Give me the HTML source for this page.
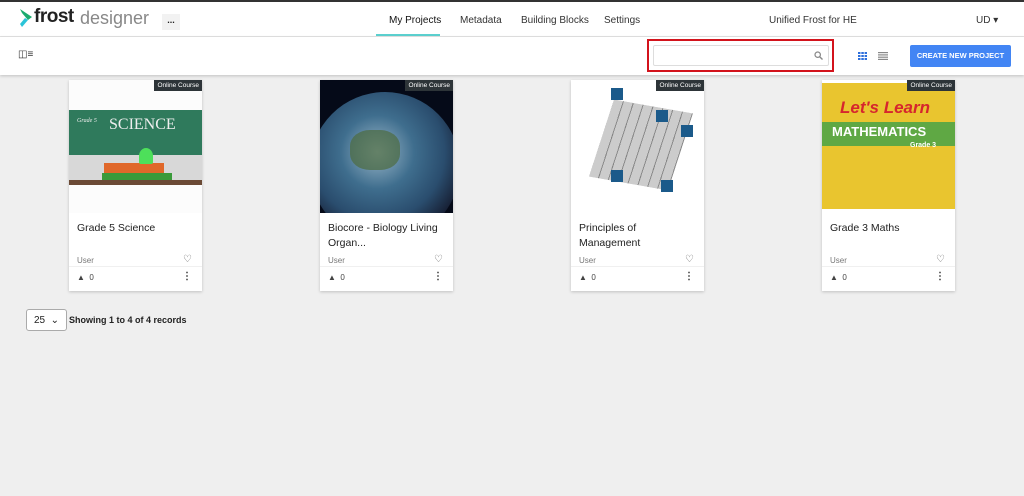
<!DOCTYPE html>
<html><head><style>
*{box-sizing:border-box;margin:0;padding:0}
body{width:1024px;height:496px;background:#efefef;font-family:"Liberation Sans",sans-serif;position:relative;overflow:hidden;color:#222}
.top{position:absolute;left:0;top:0;width:1024px;height:37px;background:#fff;border-top:2px solid #333;border-bottom:1px solid #e3e3e3}
.bar{position:absolute;left:0;top:37px;width:1024px;height:38px;background:#fff;box-shadow:0 1px 3px rgba(0,0,0,.2)}
.a{position:absolute}
.nav{font-size:10px;color:#333;top:13px}
.card{position:absolute;top:80px;width:133px;height:211px;background:#fff;box-shadow:0 1px 3px rgba(0,0,0,.2)}
.img{position:absolute;left:0;top:0;width:133px;height:133px;overflow:hidden}
.tag{position:absolute;right:0;top:0;background:#2d3438;color:#fff;font-size:6.5px;padding:2px 3px}
.ttl{position:absolute;left:8px;top:141px;font-size:10.5px;line-height:15px;color:#222;width:120px}
.user{position:absolute;left:8px;top:176px;font-size:8px;color:#777}
.heart{position:absolute;right:10px;top:174px;font-size:10px;color:#666}
.line{position:absolute;left:0;top:186px;width:133px;border-top:1px solid #f0f0f0}
.warn{position:absolute;left:8px;top:193px;font-size:8px;color:#444}
.dots{position:absolute;right:10px;top:191px;font-size:10px;font-weight:bold;color:#333}
</style></head><body>
<div class="top">
 <svg class="a" style="left:19px;top:6px" width="14" height="20" viewBox="0 0 14 20"><path d="M1 1 L13 9 L9 12 L3 5Z" fill="#1aab6e"/><path d="M9 12 L3 19 L1 16 L6 10Z" fill="#2bc4d8"/></svg>
 <div class="a" style="left:34px;top:4px;font-size:19px;font-weight:bold;letter-spacing:-0.5px;color:#222">frost</div>
 <div class="a" style="left:80px;top:6px;font-size:18px;color:#888">designer</div>
 <div class="a" style="left:162px;top:12px;width:18px;height:16px;background:#f2f2f2;font-size:9px;text-align:center;line-height:12px;font-weight:bold">...</div>
 <div class="a nav" style="left:389px;color:#111">My Projects</div>
 <div class="a" style="left:376px;top:32px;width:64px;height:2px;background:#5bd0cf"></div>
 <div class="a nav" style="left:460px">Metadata</div>
 <div class="a nav" style="left:521px">Building Blocks</div>
 <div class="a nav" style="left:604px">Settings</div>
 <div class="a nav" style="left:769px">Unified Frost for HE</div>
 <div class="a nav" style="left:976px">UD ▾</div>
</div>
<div class="bar">
 <div class="a" style="left:18px;top:12px;font-size:10px;color:#333">◫≡</div>
 <div class="a" style="left:647px;top:2px;width:187px;height:33px;border:2px solid #d3131c"></div>
 <div class="a" style="left:653px;top:8px;width:176px;height:21px;border:1px solid #ddd;border-radius:2px"></div>
 <svg class="a" style="left:814px;top:14px" width="9" height="9" viewBox="0 0 9 9"><circle cx="3.7" cy="3.7" r="2.7" stroke="#888" stroke-width="1.2" fill="none"/><path d="M5.7 5.7L8.5 8.5" stroke="#888" stroke-width="1.4"/></svg>
 <svg class="a" style="left:858px;top:15px" width="9" height="8"><g fill="#2d6fdc"><rect x="0" y="0" width="2.5" height="2"/><rect x="3.3" y="0" width="2.5" height="2"/><rect x="6.6" y="0" width="2.5" height="2"/><rect x="0" y="3" width="2.5" height="2"/><rect x="3.3" y="3" width="2.5" height="2"/><rect x="6.6" y="3" width="2.5" height="2"/><rect x="0" y="6" width="2.5" height="2"/><rect x="3.3" y="6" width="2.5" height="2"/><rect x="6.6" y="6" width="2.5" height="2"/></g></svg>
 <svg class="a" style="left:878px;top:15px" width="10" height="8"><g fill="#888"><rect y="0" width="10" height="1.2"/><rect y="2.3" width="10" height="1.2"/><rect y="4.6" width="10" height="1.2"/><rect y="6.8" width="10" height="1.2"/></g></svg>
 <div class="a" style="left:910px;top:8px;width:101px;height:22px;background:#4285f4;border-radius:2px;color:#fff;font-size:7.5px;font-weight:bold;text-align:center;line-height:22px">CREATE NEW PROJECT</div>
</div>

<div class="card" style="left:69px"><div class="img" style="background:#fcfcfc">
 <div class="a" style="left:0;top:30px;width:133px;height:45px;background:#2f7a5c"></div>
 <div class="a" style="left:8px;top:38px;font-size:6px;color:#eee;font-style:italic;font-family:'Liberation Serif',serif">Grade 5</div>
 <div class="a" style="left:40px;top:36px;font-size:16px;color:#eee;font-family:'Liberation Serif',serif">SCIENCE</div>
 <div class="a" style="left:0;top:75px;width:133px;height:30px;background:#d8d8d8"></div>
 <div class="a" style="left:35px;top:83px;width:60px;height:10px;background:#e0682a"></div>
 <div class="a" style="left:33px;top:93px;width:70px;height:12px;background:#3a9a3a"></div>
 <div class="a" style="left:70px;top:68px;width:14px;height:16px;background:#4de05a;border-radius:50% 50% 2px 2px"></div>
 <div class="a" style="left:0;top:100px;width:133px;height:5px;background:#6b4a35"></div>
 </div><div class="tag">Online Course</div><div class="ttl">Grade 5 Science</div><div class="user">User</div><div class="heart">♡</div><div class="line"></div><div class="warn">▲ &nbsp;0</div><div class="dots">⋮</div></div>

<div class="card" style="left:320px"><div class="img" style="background:#050a18">
 <div class="a" style="left:-10px;top:12px;width:150px;height:150px;border-radius:50%;background:radial-gradient(circle at 45% 40%,#9bb7c9 0%,#3f6e8e 30%,#2a4d6e 55%,#112 80%)"></div>
 <div class="a" style="left:30px;top:50px;width:50px;height:40px;border-radius:40%;background:#4d6b3e;opacity:.7"></div>
 </div><div class="tag">Online Course</div><div class="ttl">Biocore - Biology Living Organ...</div><div class="user">User</div><div class="heart">♡</div><div class="line"></div><div class="warn">▲ &nbsp;0</div><div class="dots">⋮</div></div>

<div class="card" style="left:571px"><div class="img" style="background:#fff">
 <div class="a" style="left:30px;top:25px;width:80px;height:80px;background:repeating-linear-gradient(90deg,#ccc 0 9px,#888 9px 10px),#ccc;transform:rotate(10deg) skewX(-8deg)"></div>
 <div class="a" style="left:40px;top:8px;width:12px;height:12px;background:#1b5a8a"></div>
 <div class="a" style="left:85px;top:30px;width:12px;height:12px;background:#1b5a8a"></div>
 <div class="a" style="left:110px;top:45px;width:12px;height:12px;background:#1b5a8a"></div>
 <div class="a" style="left:40px;top:90px;width:12px;height:12px;background:#1b5a8a"></div>
 <div class="a" style="left:90px;top:100px;width:12px;height:12px;background:#1b5a8a"></div>
 </div><div class="tag">Online Course</div><div class="ttl">Principles of Management</div><div class="user">User</div><div class="heart">♡</div><div class="line"></div><div class="warn">▲ &nbsp;0</div><div class="dots">⋮</div></div>

<div class="card" style="left:822px"><div class="img" style="background:#fff">
 <div class="a" style="left:0;top:3px;width:133px;height:126px;background:#e9c52f"></div>
 <div class="a" style="left:18px;top:18px;font-size:17px;color:#d6262d;font-weight:bold;font-style:italic">Let's Learn</div>
 <div class="a" style="left:0;top:42px;width:133px;height:24px;background:#5fa844"></div>
 <div class="a" style="left:10px;top:44px;font-size:13px;color:#fff;font-weight:bold">MATHEMATICS</div>
 <div class="a" style="left:88px;top:62px;font-size:7px;color:#fff;font-weight:bold">Grade 3</div>
 </div><div class="tag">Online Course</div><div class="ttl">Grade 3 Maths</div><div class="user">User</div><div class="heart">♡</div><div class="line"></div><div class="warn">▲ &nbsp;0</div><div class="dots">⋮</div></div>

<div class="a" style="left:26px;top:309px;width:41px;height:22px;border:1px solid #aaa;border-radius:3px;background:#fff;font-size:10px;padding:5px 0 0 7px">25 &nbsp;⌄</div>
<div class="a" style="left:69px;top:315px;font-size:9px;font-weight:bold;color:#222">Showing 1 to 4 of 4 records</div>
</body></html>
